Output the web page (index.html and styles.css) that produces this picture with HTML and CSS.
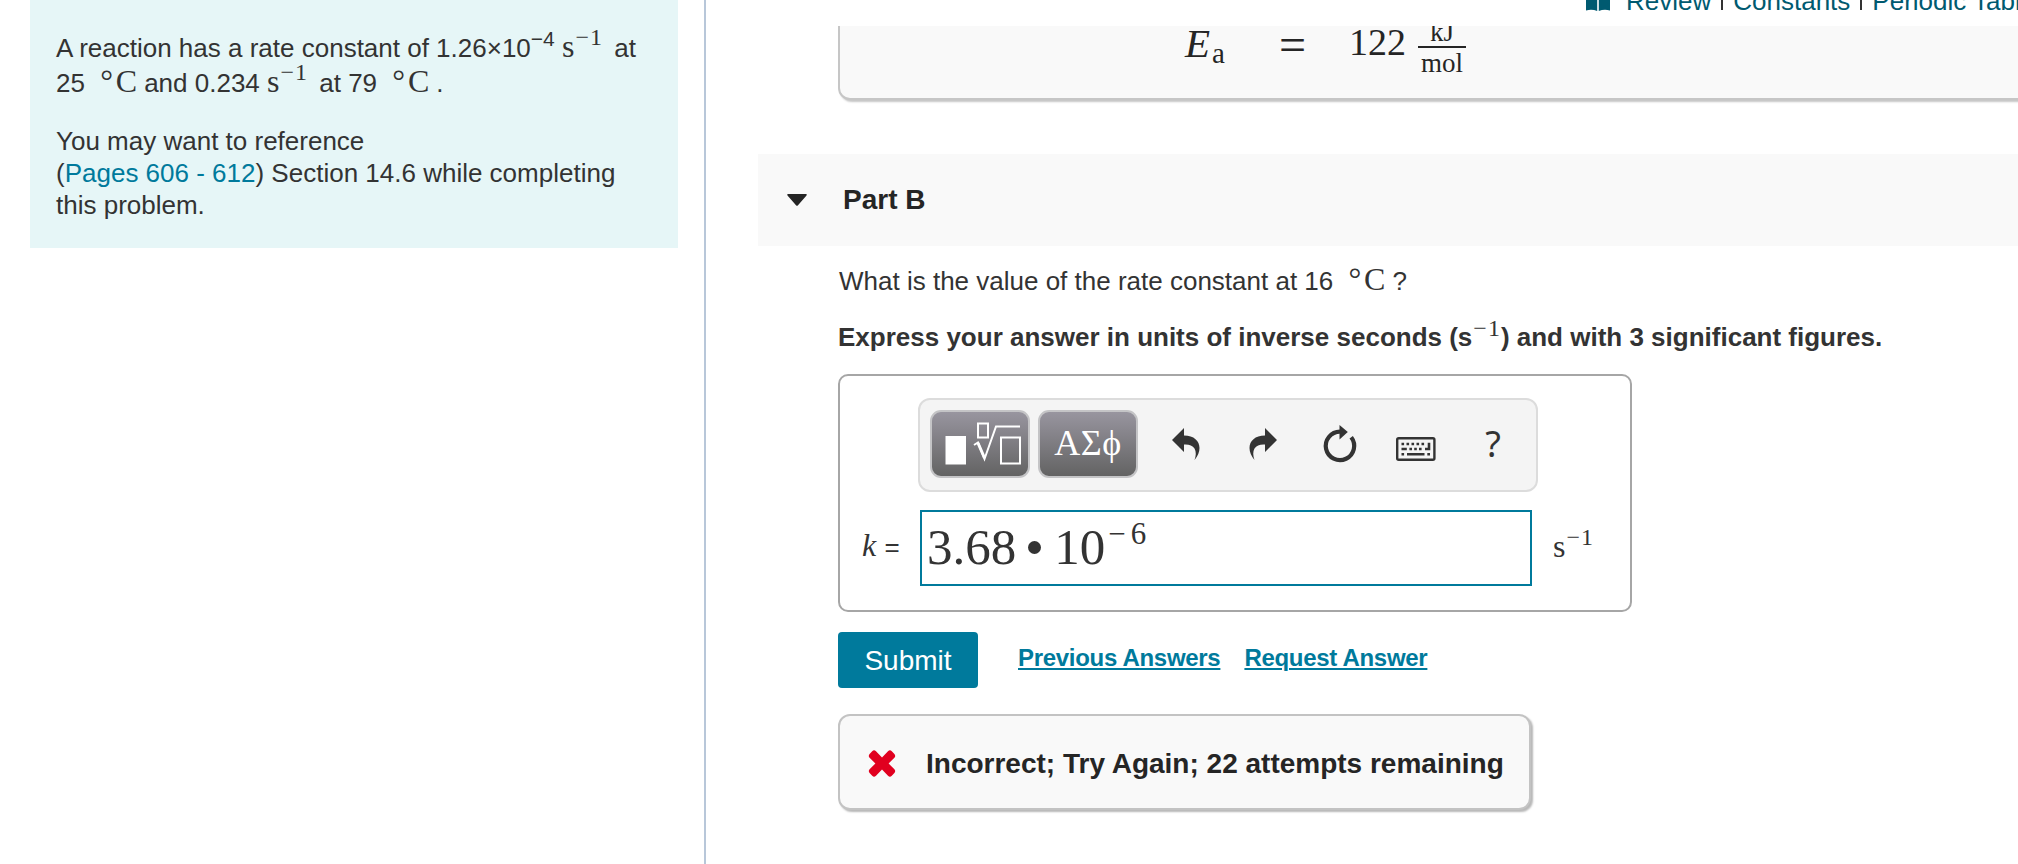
FILE: index.html
```
<!DOCTYPE html>
<html lang="en">
<head>
    <meta charset="UTF-8">
    <meta name="viewport" content="width=device-width, initial-scale=1.0">
    <title>Rate Constant - Part B</title>
    <link rel="stylesheet" href="styles.css">
</head>
<body>
    <div class="container">
        <aside class="sidebar">
            <div class="problem">
                <p class="intro">A reaction has a rate constant of 1.26×10<span class="power">−4</span> <span class="math">s<span class="exp">−1</span></span> at<br>25 <span class="math deg">°C</span> and 0.234 <span class="math">s<span class="exp">−1</span></span> at 79 <span class="math deg">°C</span> .</p>
                <p>You may want to reference<br>(<a href="#">Pages 606 - 612</a>) Section 14.6 while completing<br>this problem.</p>
            </div>
        </aside>

        <main class="content">
            <nav class="top-links">
                <svg class="book" width="24" height="24" viewBox="0 0 24 24">
                    <path d="M0 1Q7-1 11.2 2V24Q6 22 0 23.5ZM24 1Q17-1 12.8 2V24Q18 22 24 23.5Z" fill="#005a70"/>
                </svg>
                <a href="#">Review</a><i></i><a href="#">Constants</a><i></i><a href="#">Periodic Table</a>
            </nav>

            <div class="scroll-area">
                <div class="answer-a">
                    <div class="formula">
                        <span class="energy">E<small>a</small></span>
                        <span class="equals">=</span>
                        <span class="amount">122</span>
                        <span class="fraction"><span>kJ</span><span class="bottom">mol</span></span>
                    </div>
                </div>

                <div class="part-header">
                    <svg width="20" height="12" viewBox="0 0 20 12">
                        <path d="M1 0H19Q20.5 .3 19.5 1.5L11 11.2Q10 12.4 9 11.2L.5 1.5Q-.5 .3 1 0Z" fill="#252525"/>
                    </svg>
                    <h2>Part B</h2>
                </div>

                <div class="part-body">
                    <p class="question">What is the value of the rate constant at 16 <span class="math deg">°C</span> ?</p>
                    <p class="instructions">Express your answer in units of inverse seconds (s<span class="exp">−1</span>) and with 3 significant figures.</p>

                    <div class="answer-box">
                        <div class="toolbar">
                            <button class="tool dark">
                                <svg width="96" height="64" viewBox="0 0 96 64" fill="none" stroke="#fff">
                                    <path d="M13.5 24H34V52.5H13.5Z" fill="#fff" stroke="none"/>
                                    <path d="M46 11.5H56V25.5H46Z" stroke-width="2"/>
                                    <path d="M69 25.5H88V51.5H69Z" stroke-width="2"/>
                                    <path d="M42 33L46 30.5L52.5 47L64 14.5H88" stroke-width="2"/>
                                    <path d="M46 31L52.5 46" stroke-width="3"/>
                                </svg>
                            </button>
                            <button class="tool dark greek">ΑΣϕ</button>
                            <button class="tool icon">
                                <svg width="28" height="32" viewBox="0 0 28 32" fill="#333">
                                    <path d="M0 12L12 0V7.5C22 7.5 27.5 13 27.5 20Q27.5 26 22.5 32Q25 25 22.5 20.5Q19.5 16 12 16.5V24Z"/>
                                </svg>
                            </button>
                            <button class="tool icon">
                                <svg width="28" height="32" viewBox="0 0 28 32" fill="#333">
                                    <path d="M28 12L16 0V7.5C6 7.5 .5 13 .5 20Q.5 26 5.5 32Q3 25 5.5 20.5Q8.5 16 16 16.5V24Z"/>
                                </svg>
                            </button>
                            <button class="tool icon">
                                <svg class="reset" width="34" height="38" viewBox="0 0 34 38">
                                    <path d="M17 6.7A14.2 14.2 0 1 0 28.2 12.2" fill="none" stroke="#333" stroke-width="4.2"/>
                                    <path d="M16.5 0L24.8 7L16.5 14.5Z" fill="#333"/>
                                </svg>
                            </button>
                            <button class="tool icon">
                                <svg class="keyboard" width="40" height="24" viewBox="0 0 40 24">
                                    <rect x="1.2" y="1.2" width="37.2" height="21.6" rx="1.5" fill="none" stroke="#333" stroke-width="2.4"/>
                                    <path d="M5.5 7H30" stroke="#333" stroke-width="2.4" stroke-dasharray="2.6 2.4"/>
                                    <path d="M5.5 12H10.8M13.4 12H16M18.2 12H20.8M23 12H25.6M29 12H33V5.8" fill="none" stroke="#333" stroke-width="2.6"/>
                                    <path d="M5.5 17.2H8.1M11 17.2H28.5M31.3 17.2H34" stroke="#333" stroke-width="2.4"/>
                                </svg>
                            </button>
                            <button class="tool icon help">?</button>
                        </div>
                        <div class="answer-row">
                            <div class="label"><em>k</em> =</div>
                            <div class="input"><span>3.68</span><span class="dot"></span><span>10</span><span class="input-exp"><b>−</b>6</span></div>
                            <div class="math units">s<span class="exp">−1</span></div>
                        </div>
                    </div>

                    <div class="actions">
                        <button class="submit">Submit</button>
                        <a href="#">Previous Answers</a>
                        <a href="#">Request Answer</a>
                    </div>

                    <div class="feedback">
                        <svg width="28" height="27" viewBox="0 0 28 27">
                            <path d="M4.2 1.2Q6-.8 8 1.2L14 7.6L20 1.2Q22-.8 23.8 1.2L26.4 4Q28 6 26.4 7.8L20.6 13.5L26.4 19.2Q28 21 26.4 23L23.8 25.8Q22 27.8 20 25.8L14 19.4L8 25.8Q6 27.8 4.2 25.8L1.6 23Q0 21 1.6 19.2L7.4 13.5L1.6 7.8Q0 6 1.6 4Z" fill="#e1001f"/>
                        </svg>
                        <span>Incorrect; Try Again; 22 attempts remaining</span>
                    </div>
                </div>
            </div>
        </main>
    </div>
</body>
</html>
```
FILE: styles.css
```
* {
    margin: 0;
    padding: 0;
    box-sizing: border-box;
}
body {
    font-family: "Liberation Sans", Arial, sans-serif;
    font-size: 26px;
    line-height: 32px;
    color: #333;
    background: #fff;
    overflow: hidden;
}
a {
    color: #007a9c;
    text-decoration: none;
}
button {
    border: none;
    background: none;
    font-family: inherit;
}
svg {
    display: block;
    overflow: visible;
}
.container {
    display: flex;
    width: 2018px;
    height: 864px;
}

/* left column */
.sidebar {
    width: 706px;
    flex-shrink: 0;
    padding-left: 30px;
    border-right: 2px solid #b8c7d9;
}
.problem {
    width: 648px;
    height: 248px;
    padding: 31px 0 0 26px;
    background: #e6f6f7;
    white-space: nowrap;
}
.intro {
    line-height: 35px;
    margin-bottom: 24px;
}

/* math */
.math {
    font-family: "Liberation Serif", serif;
    font-size: 32px;
    line-height: 0;
}
.exp {
    font-family: "Liberation Serif", serif;
    font-size: 24px;
    font-weight: normal;
    line-height: 0;
    vertical-align: 12px;
    letter-spacing: 1px;
    margin-left: 1px;
}
.intro .exp {
    margin-right: 4px;
}
.instructions .exp {
    vertical-align: 10px;
}
.power {
    font-size: 21px;
    line-height: 0;
    vertical-align: 11px;
}
.deg {
    letter-spacing: 2.8px;
    margin-left: 8px;
    margin-right: -3px;
}

/* right column */
.content {
    flex: 1;
    min-width: 0;
    padding-left: 52px;
    overflow: hidden;
}
.top-links {
    display: flex;
    align-items: center;
    height: 26px;
    padding: 0 0 24px 828px;
    white-space: nowrap;
}
.top-links .book {
    flex-shrink: 0;
    margin: -4px 16px 0 0;
}
.top-links a {
    color: #005a70;
}
.top-links i {
    width: 2px;
    height: 18px;
    margin: 0 10px;
    flex-shrink: 0;
    background: #333;
}
.scroll-area {
    height: 838px;
    overflow: hidden;
}
.answer-a {
    height: 94px;
    margin: -20px -20px 54px 80px;
    padding-left: 346px;
    background: #f9f9f9;
    border: 2px solid #c6c6c6;
    border-radius: 12px;
    box-shadow: 2px 2px 2px #c6c6c6;
}
.formula {
    display: flex;
    font-family: "Liberation Serif", serif;
    font-size: 41px;
    line-height: 44px;
    color: #252525;
    padding-top: 13px;
}
.energy {
    width: 93px;
    margin-left: -1px;
    margin-right: 1px;
    font-style: italic;
}
.energy small {
    font-size: 29px;
    font-style: normal;
    line-height: 0;
    vertical-align: -6px;
    margin-left: 2px;
}
.equals {
    width: 70px;
    font-size: 48px;
    margin-top: 2px;
}
.amount {
    width: 69px;
    font-size: 38px;
    margin-top: -1px;
}
.fraction {
    width: 48px;
    font-size: 27px;
    line-height: 30px;
    text-align: center;
    margin-top: -4px;
}
.fraction span {
    display: block;
    height: 29px;
}
.fraction .bottom {
    border-top: 2px solid #252525;
}
.part-header {
    display: flex;
    align-items: center;
    height: 92px;
    padding-left: 29px;
    background: #f9f9f9;
}
.part-header h2 {
    font-size: 28px;
    color: #252525;
    margin-left: 36px;
}
.part-body {
    padding-left: 80px;
    white-space: nowrap;
}
.question {
    margin-top: 19px;
    padding-left: 1px;
}
.instructions {
    font-weight: bold;
    margin: 24px 0 21px;
}

/* answer editor */
.answer-box {
    width: 794px;
    height: 238px;
    padding-top: 22px;
    border: 2px solid #a6a6a6;
    border-radius: 10px;
}
.toolbar {
    display: flex;
    width: 620px;
    height: 94px;
    margin-left: 78px;
    padding: 10px;
    background: #f4f4f4;
    border: 2px solid #dcdcdc;
    border-radius: 12px;
}
.tool {
    width: 76.7px;
    height: 68px;
    flex-shrink: 0;
}
.tool.dark {
    width: 100px;
    margin-right: 8px;
    border: 2px solid #c4c4c6;
    border-radius: 11px;
    background: linear-gradient(#98959f, #636363);
}
.greek {
    font-family: "Liberation Serif", serif;
    font-size: 36px;
    letter-spacing: .5px;
    padding-bottom: 3px;
    color: #fff;
}
.tool.icon {
    display: flex;
    justify-content: center;
    align-items: center;
    padding-bottom: 1px;
    position: relative;
    left: 2px;
    color: #333;
}
.keyboard {
    margin-top: 10px;
}
.tool.help {
    font-family: "Noto Sans", sans-serif;
    font-size: 36px;
}
.answer-row {
    display: flex;
    margin-top: 18px;
}
.label {
    width: 80px;
    padding: 21px 0 0 22px;
}
.label em {
    font-family: "Liberation Serif", serif;
    font-size: 32px;
    line-height: 0;
    margin-right: 1px;
}
.input {
    display: flex;
    width: 612px;
    height: 76px;
    padding-left: 5px;
    border: 2px solid #007a9c;
    font-family: "Liberation Serif", serif;
    font-size: 51px;
    line-height: 71px;
}
.input .dot {
    width: 13px;
    height: 13px;
    margin: 29px 13px 0 12px;
    border-radius: 50%;
    background: #333;
}
.input-exp {
    font-size: 31px;
    line-height: 44px;
    margin-left: 3px;
}
.input-exp b {
    font-weight: normal;
    margin-right: 5px;
}
.units {
    line-height: 32px;
    padding: 20px 0 0 21px;
}

/* submit and feedback */
.actions {
    display: flex;
    margin-top: 20px;
}
.submit {
    width: 140px;
    height: 56px;
    margin-right: 16px;
    padding-top: 1px;
    border-radius: 4px;
    background: #007a9c;
    color: #fff;
    font-size: 28px;
}
.actions a {
    font-size: 24px;
    font-weight: bold;
    letter-spacing: -0.3px;
    line-height: 52px;
    margin-left: 24px;
    text-decoration: underline;
    text-decoration-thickness: 2px;
    text-underline-offset: 2px;
}
.feedback {
    display: flex;
    align-items: center;
    width: 693px;
    height: 96px;
    margin-top: 26px;
    padding: 3px 0 0 28px;
    background: #f9f9f9;
    border: 2px solid #c3c3c3;
    border-radius: 12px;
    box-shadow: 2px 2px 2px #b8b8b8;
    color: #252525;
    font-size: 28px;
    font-weight: bold;
}
.feedback span {
    margin-left: 30px;
}
```
